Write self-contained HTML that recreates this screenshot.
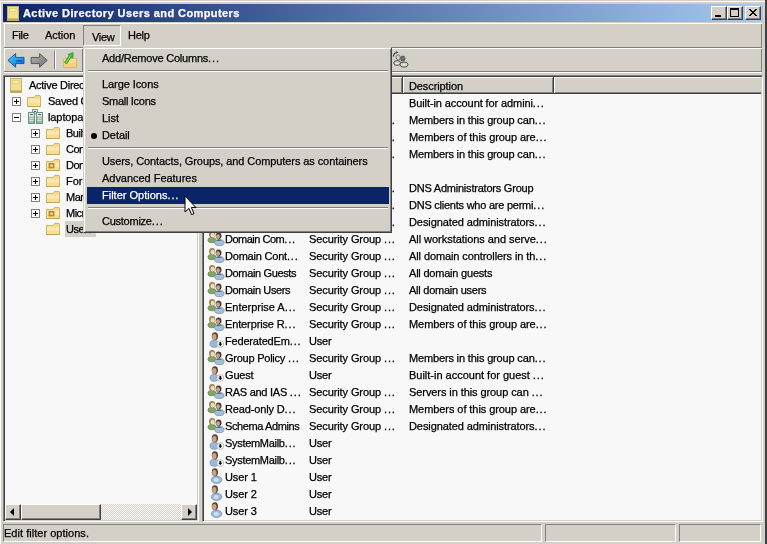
<!DOCTYPE html><html><head><meta charset="utf-8"><title>Active Directory Users and Computers</title><style>
*{box-sizing:border-box}
html,body{margin:0;padding:0}
body{width:767px;height:544px;overflow:hidden;background:#d4d0c8;position:relative;font:11px "Liberation Sans",sans-serif;color:#000}
.a{position:absolute}
.t{position:absolute;white-space:nowrap;line-height:13px;height:13px;-webkit-text-stroke:.25px currentColor}
#root{position:absolute;left:0;top:0;width:767px;height:544px;will-change:transform}
#title{left:3px;top:4px;width:760px;height:18px;background:linear-gradient(90deg,#0a246a 0%,#a6caf0 100%)}
#title .tt{left:20px;top:3px;color:#fff;font-weight:bold;}
.cb{position:absolute;top:2px;width:16px;height:14px;background:#d4d0c8;border:1px solid;border-color:#fff #404040 #404040 #fff;box-shadow:inset -1px -1px 0 #808080}
.sunk{border:1px solid;border-color:#808080 #fff #fff #808080}
.pane{background:#f8f8f8;border:1px solid;border-color:#808080 #fff #fff #808080;box-shadow:inset 1px 1px 0 #404040, inset -1px -1px 0 #d4d0c8}
.btn{background:#d4d0c8;border:1px solid;border-color:#fff #404040 #404040 #fff;box-shadow:inset -1px -1px 0 #808080}
.hl{background:#fff}.sh{background:#808080}.dk{background:#404040}
.pm{position:absolute;width:9px;height:9px;border:1px solid #808080;background:#fff}
.pm:before{content:"";position:absolute;left:1px;top:3px;width:5px;height:1px;background:#000}
.pm.p:after{content:"";position:absolute;left:3px;top:1px;width:1px;height:5px;background:#000}
</style></head><body><div id="root">
<div class="a hl" style="left:0;top:1px;width:765px;height:1px"></div>
<div class="a hl" style="left:0;top:1px;width:1px;height:543px"></div>
<div class="a" style="left:765px;top:0;width:1px;height:544px;background:#404040"></div>
<div class="a dk" style="left:766px;top:0;width:1px;height:544px"></div>
<div id="title" class="a">
<svg class="a" style="left:4px;top:2px" width="12" height="15" viewBox="0 0 12 15"><rect x=".5" y=".5" width="11" height="14" fill="#e6d486" stroke="#c8b468" stroke-width="1"/><rect x="1" y="1" width="10" height="11.5" fill="#f0e092"/><rect x="2.5" y="2.5" width="6.5" height="3" fill="#fbf0a8" stroke="#d8c470" stroke-width=".6"/><rect x=".5" y="12.5" width="11" height="2" fill="#b8a458"/></svg>
<div class="t tt"><span style="letter-spacing:0.42px">Active Directory Users and Computers</span></div>
<div class="cb" style="left:708px"><div class="a" style="left:3px;top:8px;width:6px;height:2px;background:#000"></div></div>
<div class="cb" style="left:724px"><div class="a" style="left:2px;top:1px;width:9px;height:9px;border:1px solid #000;border-top-width:2px"></div></div>
<div class="cb" style="left:742px"><svg class="a" style="left:3px;top:2px" width="8" height="7" viewBox="0 0 8 7"><path d="M0 0 L7 7 M1 0 L8 7 M7 0 L0 7 M8 0 L1 7" stroke="#000" stroke-width="1" fill="none" shape-rendering="crispEdges"/></svg></div>
</div>
<div class="a hl" style="left:4px;top:23px;width:758px;height:1px"></div>
<div class="a hl" style="left:4px;top:23px;width:1px;height:24px"></div>
<div class="a sh" style="left:4px;top:47px;width:758px;height:1px"></div>
<div class="a sh" style="left:761px;top:24px;width:1px;height:24px"></div>
<div class="t" style="left:12px;top:29px"><span style="letter-spacing:-0.31px">File</span></div>
<div class="t" style="left:45px;top:29px"><span style="letter-spacing:-0.05px">Action</span></div>
<div class="a sunk" style="left:83px;top:25px;width:38px;height:21px"></div>
<div class="t" style="left:92px;top:31px"><span style="letter-spacing:-0.29px">View</span></div>
<div class="t" style="left:128px;top:29px"><span style="letter-spacing:-0.28px">Help</span></div>
<div class="a hl" style="left:4px;top:48px;width:758px;height:1px"></div>
<div class="a hl" style="left:4px;top:48px;width:1px;height:24px"></div>
<div class="a sh" style="left:4px;top:71px;width:758px;height:1px"></div>
<div class="a sh" style="left:761px;top:49px;width:1px;height:23px"></div>
<div class="a hl" style="left:4px;top:72px;width:758px;height:1px"></div>
<svg class="a" style="left:7px;top:52px" width="18" height="17" viewBox="0 0 18 17"><defs><linearGradient id="gb" x1="0" y1="0" x2="1" y2="1"><stop offset="0" stop-color="#5cc4f8"/><stop offset=".55" stop-color="#229ae6"/><stop offset="1" stop-color="#0e5cc0"/></linearGradient><linearGradient id="gg" x1="0" y1="0" x2="1" y2="1"><stop offset="0" stop-color="#b4b4b4"/><stop offset="1" stop-color="#727272"/></linearGradient></defs><path d="M0.9 8.3 L8.6 1.6 V5.4 H17 V11.6 H8.6 V15.2 Z" fill="url(#gb)" stroke="#1c5aa6" stroke-width="1" stroke-linejoin="round"/><path d="M9 8 H15 V10 H9Z" fill="#0e58b8" opacity=".7"/></svg>
<svg class="a" style="left:30px;top:52px" width="18" height="17" viewBox="0 0 18 17"><path d="M17.2 8.3 L9.6 1.6 V5.4 H1.2 V11.6 H9.6 V15.2 Z" fill="url(#gg)" stroke="#555" stroke-width="1" stroke-linejoin="round"/></svg>
<div class="a sh" style="left:54px;top:51px;width:1px;height:18px"></div><div class="a hl" style="left:55px;top:51px;width:1px;height:18px"></div>
<div class="a sh" style="left:82px;top:49px;width:1px;height:22px"></div>
<svg class="a" style="left:62px;top:51px" width="17" height="18" viewBox="0 0 17 18"><path d="M1.5 7.5 H14.5 V16.5 H1.5Z" fill="#f6dc94" stroke="#d8b870"/><path d="M2 12 H14 V16 H2Z" fill="#f2d07c"/><path d="M6 3.4 L11.2 1.6 L10.8 7.2Z" fill="#4cba3c" stroke="#2f8f26" stroke-width=".7"/><path d="M3.4 12.4 L8.6 4.6" stroke="#2f8f26" stroke-width="3.2" fill="none"/><path d="M3.6 12.1 L8.8 4.3" stroke="#74d654" stroke-width="1.6" fill="none"/></svg>
<svg class="a" style="left:391px;top:51px" width="19" height="18" viewBox="0 0 19 18"><path d="M2.4 5.6 Q2.6 1.8 6 1.4" stroke="#4a4a4a" stroke-width="1.3" fill="none"/><path d="M5 0 L7.2 1.6 L5 2.8Z" fill="#4a4a4a"/><ellipse cx="7.2" cy="6.4" rx="2" ry="2.6" fill="#d8d8d8" stroke="#6a6a6a" stroke-width=".9"/><ellipse cx="6.2" cy="12" rx="3.4" ry="2.4" fill="#c8c8c8" stroke="#555" stroke-width="1"/><ellipse cx="11.8" cy="7.6" rx="2.2" ry="2.6" fill="#6e6e6e" stroke="#4a4a4a" stroke-width=".8"/><ellipse cx="13" cy="13.6" rx="4" ry="2.6" fill="#d0d0d0" stroke="#555" stroke-width="1"/><path d="M4.5 12.4h3M11.4 14h3.2" stroke="#f4f4f4" stroke-width="1.2"/></svg>
<div class="a pane" style="left:3px;top:75px;width:196px;height:447px"></div>
<div class="a" style="left:6px;top:76px;width:191px;height:428px;overflow:hidden">
<svg class="a" style="left:4px;top:2px" width="12" height="15" viewBox="0 0 12 15"><rect x=".5" y=".5" width="11" height="14" fill="#e6d486" stroke="#c8b468" stroke-width="1"/><rect x="1" y="1" width="10" height="11.5" fill="#f0e092"/><rect x="2.5" y="2.5" width="6.5" height="3" fill="#fbf0a8" stroke="#d8c470" stroke-width=".6"/><rect x=".5" y="12.5" width="11" height="2" fill="#b8a458"/></svg>
<div class="t" style="left:23px;top:3px"><span style="letter-spacing:-0.28px">Active Directory Users and Computers</span></div>
<div class="pm p" style="left:6px;top:21px"></div>
<svg class="a" style="left:20px;top:17px" width="16" height="16" viewBox="0 0 16 16"><path d="M1.5 4.5 H8 L9.5 2.5 H14 L14.5 3.5 V13.5 H1.5 Z" fill="#efd78c" stroke="#d2b467" stroke-width="1"/><path d="M2 5.5 H14 V13 H2 Z" fill="#f9e9ae"/><path d="M2 9.5 H14 V13 H2 Z" fill="#f4df98"/><path d="M1.5 13.5 H14.5" stroke="#c4a254" stroke-width="1"/></svg>
<div class="t" style="left:42px;top:19px"><span style="letter-spacing:-0.28px">Saved Queries</span></div>
<div class="pm " style="left:6px;top:37px"></div>
<svg class="a" style="left:20px;top:33px" width="18" height="16" viewBox="0 0 18 16"><rect x="6.5" y="0.5" width="5" height="4.5" fill="#e2e6ec" stroke="#8896a6"/><rect x="2.5" y="3.5" width="6" height="11" fill="#9abea2" stroke="#6e947c"/><rect x="10.5" y="3.5" width="6" height="11" fill="#9abea2" stroke="#6e947c"/><rect x="3" y="4" width="5" height="3.6" fill="#e6eaf0"/><rect x="11" y="4" width="5" height="3.6" fill="#e6eaf0"/><path d="M4 5.5h3M12 5.5h3M8 2.5h2" stroke="#4e607c" stroke-width="1"/><path d="M3.5 9.5h4M3.5 11.5h4M11.5 9.5h4M11.5 11.5h4" stroke="#cfe4d2" stroke-width="1"/></svg>
<div class="t" style="left:42px;top:35px"><span style="letter-spacing:-0.10px">laptopassist.local</span></div>
<div class="pm p" style="left:25px;top:53px"></div>
<svg class="a" style="left:39px;top:49px" width="16" height="16" viewBox="0 0 16 16"><path d="M1.5 4.5 H8 L9.5 2.5 H14 L14.5 3.5 V13.5 H1.5 Z" fill="#efd78c" stroke="#d2b467" stroke-width="1"/><path d="M2 5.5 H14 V13 H2 Z" fill="#f9e9ae"/><path d="M2 9.5 H14 V13 H2 Z" fill="#f4df98"/><path d="M1.5 13.5 H14.5" stroke="#c4a254" stroke-width="1"/></svg>
<div class="t" style="left:60px;top:51px"><span style="letter-spacing:-0.50px">Builtin</span></div>
<div class="pm p" style="left:25px;top:69px"></div>
<svg class="a" style="left:39px;top:65px" width="16" height="16" viewBox="0 0 16 16"><path d="M1.5 4.5 H8 L9.5 2.5 H14 L14.5 3.5 V13.5 H1.5 Z" fill="#efd78c" stroke="#d2b467" stroke-width="1"/><path d="M2 5.5 H14 V13 H2 Z" fill="#f9e9ae"/><path d="M2 9.5 H14 V13 H2 Z" fill="#f4df98"/><path d="M1.5 13.5 H14.5" stroke="#c4a254" stroke-width="1"/></svg>
<div class="t" style="left:60px;top:67px"><span style="letter-spacing:-0.50px">Computers</span></div>
<div class="pm p" style="left:25px;top:85px"></div>
<svg class="a" style="left:39px;top:81px" width="16" height="16" viewBox="0 0 16 16"><path d="M1.5 4.5 H8 L9.5 2.5 H14 L14.5 3.5 V13.5 H1.5 Z" fill="#efd78c" stroke="#d2b467" stroke-width="1"/><path d="M2 5.5 H14 V13 H2 Z" fill="#f9e9ae"/><path d="M2 9.5 H14 V13 H2 Z" fill="#f4df98"/><path d="M1.5 13.5 H14.5" stroke="#c4a254" stroke-width="1"/><rect x="4" y="6.5" width="5" height="4.5" fill="#c89a34" stroke="#a87c24" stroke-width=".8"/><rect x="5.4" y="7.8" width="2.2" height="1.8" fill="#f6e6a8"/></svg>
<div class="t" style="left:60px;top:83px"><span style="letter-spacing:-0.50px">Domain Controllers</span></div>
<div class="pm p" style="left:25px;top:101px"></div>
<svg class="a" style="left:39px;top:97px" width="16" height="16" viewBox="0 0 16 16"><path d="M1.5 4.5 H8 L9.5 2.5 H14 L14.5 3.5 V13.5 H1.5 Z" fill="#efd78c" stroke="#d2b467" stroke-width="1"/><path d="M2 5.5 H14 V13 H2 Z" fill="#f9e9ae"/><path d="M2 9.5 H14 V13 H2 Z" fill="#f4df98"/><path d="M1.5 13.5 H14.5" stroke="#c4a254" stroke-width="1"/></svg>
<div class="t" style="left:60px;top:99px"><span style="letter-spacing:0.00px">ForeignSecurityPrincipals</span></div>
<div class="pm p" style="left:25px;top:117px"></div>
<svg class="a" style="left:39px;top:113px" width="16" height="16" viewBox="0 0 16 16"><path d="M1.5 4.5 H8 L9.5 2.5 H14 L14.5 3.5 V13.5 H1.5 Z" fill="#efd78c" stroke="#d2b467" stroke-width="1"/><path d="M2 5.5 H14 V13 H2 Z" fill="#f9e9ae"/><path d="M2 9.5 H14 V13 H2 Z" fill="#f4df98"/><path d="M1.5 13.5 H14.5" stroke="#c4a254" stroke-width="1"/></svg>
<div class="t" style="left:60px;top:115px"><span style="letter-spacing:-0.50px">Managed Service Accounts</span></div>
<div class="pm p" style="left:25px;top:133px"></div>
<svg class="a" style="left:39px;top:129px" width="16" height="16" viewBox="0 0 16 16"><path d="M1.5 4.5 H8 L9.5 2.5 H14 L14.5 3.5 V13.5 H1.5 Z" fill="#efd78c" stroke="#d2b467" stroke-width="1"/><path d="M2 5.5 H14 V13 H2 Z" fill="#f9e9ae"/><path d="M2 9.5 H14 V13 H2 Z" fill="#f4df98"/><path d="M1.5 13.5 H14.5" stroke="#c4a254" stroke-width="1"/><rect x="4" y="6.5" width="5" height="4.5" fill="#c89a34" stroke="#a87c24" stroke-width=".8"/><rect x="5.4" y="7.8" width="2.2" height="1.8" fill="#f6e6a8"/></svg>
<div class="t" style="left:60px;top:131px"><span style="letter-spacing:-0.50px">Microsoft Exchange Security Groups</span></div>
<svg class="a" style="left:39px;top:145px" width="16" height="16" viewBox="0 0 16 16"><path d="M1.5 4.5 H8 L9.5 2.5 H14 L14.5 3.5 V13.5 H1.5 Z" fill="#efd78c" stroke="#d2b467" stroke-width="1"/><path d="M2 5.5 H14 V13 H2 Z" fill="#f9e9ae"/><path d="M2 9.5 H14 V13 H2 Z" fill="#f4df98"/><path d="M1.5 13.5 H14.5" stroke="#c4a254" stroke-width="1"/></svg>
<div class="a" style="left:59px;top:145px;width:31px;height:16px;background:#d4d0c8"></div>
<div class="t" style="left:60px;top:147px"><span style="letter-spacing:-0.50px">Users</span></div>
</div>
<div class="a" style="left:5px;top:504px;width:192px;height:16px;background:repeating-conic-gradient(#fff 0% 25%,#d4d0c8 0% 50%) 0 0/2px 2px"></div>
<div class="a btn" style="left:5px;top:504px;width:16px;height:16px"><div class="a" style="left:4px;top:3px;border:4px solid transparent;border-right:4px solid #000;border-left:0"></div></div>
<div class="a btn" style="left:21px;top:504px;width:80px;height:16px"></div>
<div class="a btn" style="left:181px;top:504px;width:16px;height:16px"><div class="a" style="left:6px;top:3px;border:4px solid transparent;border-left:4px solid #000;border-right:0"></div></div>
<div class="a pane" style="left:202px;top:75px;width:561px;height:447px"></div>
<div class="a" style="left:204px;top:77px;width:557px;height:17px;background:#d4d0c8;border-bottom:1px solid #404040;box-shadow:inset 0 -1px 0 #808080, inset 0 1px 0 #fff"></div>
<div class="a sh" style="left:303px;top:78px;width:1px;height:15px"></div><div class="a dk" style="left:304px;top:77px;width:1px;height:17px"></div><div class="a hl" style="left:305px;top:77px;width:1px;height:16px"></div>
<div class="a sh" style="left:401px;top:78px;width:1px;height:15px"></div><div class="a dk" style="left:402px;top:77px;width:1px;height:17px"></div><div class="a hl" style="left:403px;top:77px;width:1px;height:16px"></div>
<div class="a sh" style="left:552px;top:78px;width:1px;height:15px"></div><div class="a dk" style="left:553px;top:77px;width:1px;height:17px"></div><div class="a hl" style="left:554px;top:77px;width:1px;height:16px"></div>
<div class="t" style="left:211px;top:80px">Name</div>
<div class="t" style="left:311px;top:80px">Type</div>
<div class="t" style="left:409px;top:80px"><span style="letter-spacing:-0.10px">Description</span></div>
<svg class="a" style="left:208px;top:94px" width="17" height="16" viewBox="0 0 17 16"><ellipse cx="8.6" cy="11.8" rx="5.3" ry="3.7" fill="#9cb8dc" stroke="#6c8cb4" stroke-width=".7"/><ellipse cx="8.2" cy="12" rx="2.6" ry="2" fill="#cfe0f0"/><ellipse cx="6.9" cy="4.2" rx="3.1" ry="4" fill="#5c4434"/><ellipse cx="6.3" cy="5" rx="2.2" ry="2.9" fill="#caa484"/></svg>
<div class="t" style="left:225px;top:97px"><span style="letter-spacing:-0.20px">Administrator</span></div>
<div class="t" style="left:309px;top:97px"><span style="letter-spacing:-0.16px">User</span></div>
<div class="t" style="left:409px;top:97px"><span style="letter-spacing:-0.10px">Built-in account for admini</span><span style="letter-spacing:.9px">...</span></div>
<svg class="a" style="left:207px;top:111px" width="18" height="16" viewBox="0 0 18 16"><ellipse cx="4.9" cy="10.1" rx="4" ry="2.7" fill="#82a662" stroke="#5f8448" stroke-width=".7"/><ellipse cx="5.1" cy="4.5" rx="3.1" ry="3.4" fill="#9a8658"/><ellipse cx="5.7" cy="5.2" rx="2" ry="2.4" fill="#f0dcc0"/><ellipse cx="12.4" cy="12.6" rx="4.7" ry="3.1" fill="#a6bfd8" stroke="#6c88a8" stroke-width=".7"/><path d="M9 10.4 Q12 8.6 15 10.6 Q12 11.6 9 10.4Z" fill="#586878"/><ellipse cx="11.6" cy="5.8" rx="2.9" ry="3.4" fill="#4e3c30"/><ellipse cx="11" cy="6.6" rx="1.9" ry="2.4" fill="#c8a890"/></svg>
<div class="t" style="left:225px;top:114px"><span style="letter-spacing:-0.20px">Allowed RO</span><span style="letter-spacing:.9px">...</span></div>
<div class="t" style="left:309px;top:114px"><span style="letter-spacing:-0.10px">Security Group </span><span style="letter-spacing:.9px">...</span></div>
<div class="t" style="left:409px;top:114px"><span style="letter-spacing:-0.16px">Members in this group can</span><span style="letter-spacing:.9px">...</span></div>
<svg class="a" style="left:207px;top:128px" width="18" height="16" viewBox="0 0 18 16"><ellipse cx="4.9" cy="10.1" rx="4" ry="2.7" fill="#82a662" stroke="#5f8448" stroke-width=".7"/><ellipse cx="5.1" cy="4.5" rx="3.1" ry="3.4" fill="#9a8658"/><ellipse cx="5.7" cy="5.2" rx="2" ry="2.4" fill="#f0dcc0"/><ellipse cx="12.4" cy="12.6" rx="4.7" ry="3.1" fill="#a6bfd8" stroke="#6c88a8" stroke-width=".7"/><path d="M9 10.4 Q12 8.6 15 10.6 Q12 11.6 9 10.4Z" fill="#586878"/><ellipse cx="11.6" cy="5.8" rx="2.9" ry="3.4" fill="#4e3c30"/><ellipse cx="11" cy="6.6" rx="1.9" ry="2.4" fill="#c8a890"/></svg>
<div class="t" style="left:225px;top:131px"><span style="letter-spacing:-0.20px">Cert Publish</span><span style="letter-spacing:.9px">...</span></div>
<div class="t" style="left:309px;top:131px"><span style="letter-spacing:-0.10px">Security Group </span><span style="letter-spacing:.9px">...</span></div>
<div class="t" style="left:409px;top:131px"><span style="letter-spacing:-0.07px">Members of this group are</span><span style="letter-spacing:.9px">...</span></div>
<svg class="a" style="left:207px;top:145px" width="18" height="16" viewBox="0 0 18 16"><ellipse cx="4.9" cy="10.1" rx="4" ry="2.7" fill="#82a662" stroke="#5f8448" stroke-width=".7"/><ellipse cx="5.1" cy="4.5" rx="3.1" ry="3.4" fill="#9a8658"/><ellipse cx="5.7" cy="5.2" rx="2" ry="2.4" fill="#f0dcc0"/><ellipse cx="12.4" cy="12.6" rx="4.7" ry="3.1" fill="#a6bfd8" stroke="#6c88a8" stroke-width=".7"/><path d="M9 10.4 Q12 8.6 15 10.6 Q12 11.6 9 10.4Z" fill="#586878"/><ellipse cx="11.6" cy="5.8" rx="2.9" ry="3.4" fill="#4e3c30"/><ellipse cx="11" cy="6.6" rx="1.9" ry="2.4" fill="#c8a890"/></svg>
<div class="t" style="left:225px;top:148px"><span style="letter-spacing:-0.20px">Denied ROD</span><span style="letter-spacing:.9px">...</span></div>
<div class="t" style="left:309px;top:148px"><span style="letter-spacing:-0.10px">Security Group </span><span style="letter-spacing:.9px">...</span></div>
<div class="t" style="left:409px;top:148px"><span style="letter-spacing:-0.16px">Members in this group can</span><span style="letter-spacing:.9px">...</span></div>
<svg class="a" style="left:208px;top:162px" width="17" height="16" viewBox="0 0 17 16"><ellipse cx="6.2" cy="11.8" rx="4.2" ry="3.5" fill="#9cb8d8" stroke="#6c8cb0" stroke-width=".7"/><ellipse cx="6.9" cy="4.2" rx="3.1" ry="4" fill="#5c4434"/><ellipse cx="6.3" cy="5" rx="2.2" ry="2.9" fill="#caa484"/><circle cx="12.3" cy="12" r="3.4" fill="#fff" stroke="#a8a8a8" stroke-width=".7"/><path d="M12.3 9.9 V12.4" stroke="#111" stroke-width="1.7" fill="none"/><path d="M10.3 11.8 H14.3 L12.3 14.3Z" fill="#111"/></svg>
<div class="t" style="left:225px;top:165px"><span style="letter-spacing:-0.20px">Dept Mailbox</span></div>
<div class="t" style="left:309px;top:165px"><span style="letter-spacing:-0.16px">User</span></div>
<svg class="a" style="left:207px;top:179px" width="18" height="16" viewBox="0 0 18 16"><ellipse cx="4.9" cy="10.1" rx="4" ry="2.7" fill="#82a662" stroke="#5f8448" stroke-width=".7"/><ellipse cx="5.1" cy="4.5" rx="3.1" ry="3.4" fill="#9a8658"/><ellipse cx="5.7" cy="5.2" rx="2" ry="2.4" fill="#f0dcc0"/><ellipse cx="12.4" cy="12.6" rx="4.7" ry="3.1" fill="#a6bfd8" stroke="#6c88a8" stroke-width=".7"/><path d="M9 10.4 Q12 8.6 15 10.6 Q12 11.6 9 10.4Z" fill="#586878"/><ellipse cx="11.6" cy="5.8" rx="2.9" ry="3.4" fill="#4e3c30"/><ellipse cx="11" cy="6.6" rx="1.9" ry="2.4" fill="#c8a890"/></svg>
<div class="t" style="left:225px;top:182px"><span style="letter-spacing:-0.20px">DnsAdmins</span></div>
<div class="t" style="left:309px;top:182px"><span style="letter-spacing:-0.10px">Security Group </span><span style="letter-spacing:.9px">...</span></div>
<div class="t" style="left:409px;top:182px"><span style="letter-spacing:-0.22px">DNS Administrators Group</span></div>
<svg class="a" style="left:207px;top:196px" width="18" height="16" viewBox="0 0 18 16"><ellipse cx="4.9" cy="10.1" rx="4" ry="2.7" fill="#82a662" stroke="#5f8448" stroke-width=".7"/><ellipse cx="5.1" cy="4.5" rx="3.1" ry="3.4" fill="#9a8658"/><ellipse cx="5.7" cy="5.2" rx="2" ry="2.4" fill="#f0dcc0"/><ellipse cx="12.4" cy="12.6" rx="4.7" ry="3.1" fill="#a6bfd8" stroke="#6c88a8" stroke-width=".7"/><path d="M9 10.4 Q12 8.6 15 10.6 Q12 11.6 9 10.4Z" fill="#586878"/><ellipse cx="11.6" cy="5.8" rx="2.9" ry="3.4" fill="#4e3c30"/><ellipse cx="11" cy="6.6" rx="1.9" ry="2.4" fill="#c8a890"/></svg>
<div class="t" style="left:225px;top:199px"><span style="letter-spacing:-0.20px">DnsUpdateP</span><span style="letter-spacing:.9px">...</span></div>
<div class="t" style="left:309px;top:199px"><span style="letter-spacing:-0.10px">Security Group </span><span style="letter-spacing:.9px">...</span></div>
<div class="t" style="left:409px;top:199px"><span style="letter-spacing:-0.24px">DNS clients who are permi</span><span style="letter-spacing:.9px">...</span></div>
<svg class="a" style="left:207px;top:213px" width="18" height="16" viewBox="0 0 18 16"><ellipse cx="4.9" cy="10.1" rx="4" ry="2.7" fill="#82a662" stroke="#5f8448" stroke-width=".7"/><ellipse cx="5.1" cy="4.5" rx="3.1" ry="3.4" fill="#9a8658"/><ellipse cx="5.7" cy="5.2" rx="2" ry="2.4" fill="#f0dcc0"/><ellipse cx="12.4" cy="12.6" rx="4.7" ry="3.1" fill="#a6bfd8" stroke="#6c88a8" stroke-width=".7"/><path d="M9 10.4 Q12 8.6 15 10.6 Q12 11.6 9 10.4Z" fill="#586878"/><ellipse cx="11.6" cy="5.8" rx="2.9" ry="3.4" fill="#4e3c30"/><ellipse cx="11" cy="6.6" rx="1.9" ry="2.4" fill="#c8a890"/></svg>
<div class="t" style="left:225px;top:216px"><span style="letter-spacing:-0.20px">Domain Admins</span></div>
<div class="t" style="left:309px;top:216px"><span style="letter-spacing:-0.10px">Security Group </span><span style="letter-spacing:.9px">...</span></div>
<div class="t" style="left:409px;top:216px"><span style="letter-spacing:-0.09px">Designated administrators</span><span style="letter-spacing:.9px">...</span></div>
<svg class="a" style="left:207px;top:230px" width="18" height="16" viewBox="0 0 18 16"><ellipse cx="4.9" cy="10.1" rx="4" ry="2.7" fill="#82a662" stroke="#5f8448" stroke-width=".7"/><ellipse cx="5.1" cy="4.5" rx="3.1" ry="3.4" fill="#9a8658"/><ellipse cx="5.7" cy="5.2" rx="2" ry="2.4" fill="#f0dcc0"/><ellipse cx="12.4" cy="12.6" rx="4.7" ry="3.1" fill="#a6bfd8" stroke="#6c88a8" stroke-width=".7"/><path d="M9 10.4 Q12 8.6 15 10.6 Q12 11.6 9 10.4Z" fill="#586878"/><ellipse cx="11.6" cy="5.8" rx="2.9" ry="3.4" fill="#4e3c30"/><ellipse cx="11" cy="6.6" rx="1.9" ry="2.4" fill="#c8a890"/></svg>
<div class="t" style="left:225px;top:233px"><span style="letter-spacing:-0.50px">Domain Com</span><span style="letter-spacing:.9px">...</span></div>
<div class="t" style="left:309px;top:233px"><span style="letter-spacing:-0.10px">Security Group </span><span style="letter-spacing:.9px">...</span></div>
<div class="t" style="left:409px;top:233px"><span style="letter-spacing:-0.04px">All workstations and serve</span><span style="letter-spacing:.9px">...</span></div>
<svg class="a" style="left:207px;top:247px" width="18" height="16" viewBox="0 0 18 16"><ellipse cx="4.9" cy="10.1" rx="4" ry="2.7" fill="#82a662" stroke="#5f8448" stroke-width=".7"/><ellipse cx="5.1" cy="4.5" rx="3.1" ry="3.4" fill="#9a8658"/><ellipse cx="5.7" cy="5.2" rx="2" ry="2.4" fill="#f0dcc0"/><ellipse cx="12.4" cy="12.6" rx="4.7" ry="3.1" fill="#a6bfd8" stroke="#6c88a8" stroke-width=".7"/><path d="M9 10.4 Q12 8.6 15 10.6 Q12 11.6 9 10.4Z" fill="#586878"/><ellipse cx="11.6" cy="5.8" rx="2.9" ry="3.4" fill="#4e3c30"/><ellipse cx="11" cy="6.6" rx="1.9" ry="2.4" fill="#c8a890"/></svg>
<div class="t" style="left:225px;top:250px"><span style="letter-spacing:-0.21px">Domain Cont</span><span style="letter-spacing:.9px">...</span></div>
<div class="t" style="left:309px;top:250px"><span style="letter-spacing:-0.10px">Security Group </span><span style="letter-spacing:.9px">...</span></div>
<div class="t" style="left:409px;top:250px"><span style="letter-spacing:-0.10px">All domain controllers in th</span><span style="letter-spacing:.9px">...</span></div>
<svg class="a" style="left:207px;top:264px" width="18" height="16" viewBox="0 0 18 16"><ellipse cx="4.9" cy="10.1" rx="4" ry="2.7" fill="#82a662" stroke="#5f8448" stroke-width=".7"/><ellipse cx="5.1" cy="4.5" rx="3.1" ry="3.4" fill="#9a8658"/><ellipse cx="5.7" cy="5.2" rx="2" ry="2.4" fill="#f0dcc0"/><ellipse cx="12.4" cy="12.6" rx="4.7" ry="3.1" fill="#a6bfd8" stroke="#6c88a8" stroke-width=".7"/><path d="M9 10.4 Q12 8.6 15 10.6 Q12 11.6 9 10.4Z" fill="#586878"/><ellipse cx="11.6" cy="5.8" rx="2.9" ry="3.4" fill="#4e3c30"/><ellipse cx="11" cy="6.6" rx="1.9" ry="2.4" fill="#c8a890"/></svg>
<div class="t" style="left:225px;top:267px"><span style="letter-spacing:-0.36px">Domain Guests</span></div>
<div class="t" style="left:309px;top:267px"><span style="letter-spacing:-0.10px">Security Group </span><span style="letter-spacing:.9px">...</span></div>
<div class="t" style="left:409px;top:267px"><span style="letter-spacing:-0.21px">All domain guests</span></div>
<svg class="a" style="left:207px;top:281px" width="18" height="16" viewBox="0 0 18 16"><ellipse cx="4.9" cy="10.1" rx="4" ry="2.7" fill="#82a662" stroke="#5f8448" stroke-width=".7"/><ellipse cx="5.1" cy="4.5" rx="3.1" ry="3.4" fill="#9a8658"/><ellipse cx="5.7" cy="5.2" rx="2" ry="2.4" fill="#f0dcc0"/><ellipse cx="12.4" cy="12.6" rx="4.7" ry="3.1" fill="#a6bfd8" stroke="#6c88a8" stroke-width=".7"/><path d="M9 10.4 Q12 8.6 15 10.6 Q12 11.6 9 10.4Z" fill="#586878"/><ellipse cx="11.6" cy="5.8" rx="2.9" ry="3.4" fill="#4e3c30"/><ellipse cx="11" cy="6.6" rx="1.9" ry="2.4" fill="#c8a890"/></svg>
<div class="t" style="left:225px;top:284px"><span style="letter-spacing:-0.37px">Domain Users</span></div>
<div class="t" style="left:309px;top:284px"><span style="letter-spacing:-0.10px">Security Group </span><span style="letter-spacing:.9px">...</span></div>
<div class="t" style="left:409px;top:284px"><span style="letter-spacing:-0.25px">All domain users</span></div>
<svg class="a" style="left:207px;top:298px" width="18" height="16" viewBox="0 0 18 16"><ellipse cx="4.9" cy="10.1" rx="4" ry="2.7" fill="#82a662" stroke="#5f8448" stroke-width=".7"/><ellipse cx="5.1" cy="4.5" rx="3.1" ry="3.4" fill="#9a8658"/><ellipse cx="5.7" cy="5.2" rx="2" ry="2.4" fill="#f0dcc0"/><ellipse cx="12.4" cy="12.6" rx="4.7" ry="3.1" fill="#a6bfd8" stroke="#6c88a8" stroke-width=".7"/><path d="M9 10.4 Q12 8.6 15 10.6 Q12 11.6 9 10.4Z" fill="#586878"/><ellipse cx="11.6" cy="5.8" rx="2.9" ry="3.4" fill="#4e3c30"/><ellipse cx="11" cy="6.6" rx="1.9" ry="2.4" fill="#c8a890"/></svg>
<div class="t" style="left:225px;top:301px"><span style="letter-spacing:-0.02px">Enterprise A</span><span style="letter-spacing:.9px">...</span></div>
<div class="t" style="left:309px;top:301px"><span style="letter-spacing:-0.10px">Security Group </span><span style="letter-spacing:.9px">...</span></div>
<div class="t" style="left:409px;top:301px"><span style="letter-spacing:-0.09px">Designated administrators</span><span style="letter-spacing:.9px">...</span></div>
<svg class="a" style="left:207px;top:315px" width="18" height="16" viewBox="0 0 18 16"><ellipse cx="4.9" cy="10.1" rx="4" ry="2.7" fill="#82a662" stroke="#5f8448" stroke-width=".7"/><ellipse cx="5.1" cy="4.5" rx="3.1" ry="3.4" fill="#9a8658"/><ellipse cx="5.7" cy="5.2" rx="2" ry="2.4" fill="#f0dcc0"/><ellipse cx="12.4" cy="12.6" rx="4.7" ry="3.1" fill="#a6bfd8" stroke="#6c88a8" stroke-width=".7"/><path d="M9 10.4 Q12 8.6 15 10.6 Q12 11.6 9 10.4Z" fill="#586878"/><ellipse cx="11.6" cy="5.8" rx="2.9" ry="3.4" fill="#4e3c30"/><ellipse cx="11" cy="6.6" rx="1.9" ry="2.4" fill="#c8a890"/></svg>
<div class="t" style="left:225px;top:318px"><span style="letter-spacing:-0.13px">Enterprise R</span><span style="letter-spacing:.9px">...</span></div>
<div class="t" style="left:309px;top:318px"><span style="letter-spacing:-0.10px">Security Group </span><span style="letter-spacing:.9px">...</span></div>
<div class="t" style="left:409px;top:318px"><span style="letter-spacing:-0.07px">Members of this group are</span><span style="letter-spacing:.9px">...</span></div>
<svg class="a" style="left:208px;top:332px" width="17" height="16" viewBox="0 0 17 16"><ellipse cx="6.2" cy="11.8" rx="4.2" ry="3.5" fill="#9cb8d8" stroke="#6c8cb0" stroke-width=".7"/><ellipse cx="6.9" cy="4.2" rx="3.1" ry="4" fill="#5c4434"/><ellipse cx="6.3" cy="5" rx="2.2" ry="2.9" fill="#caa484"/><circle cx="12.3" cy="12" r="3.4" fill="#fff" stroke="#a8a8a8" stroke-width=".7"/><path d="M12.3 9.9 V12.4" stroke="#111" stroke-width="1.7" fill="none"/><path d="M10.3 11.8 H14.3 L12.3 14.3Z" fill="#111"/></svg>
<div class="t" style="left:225px;top:335px"><span style="letter-spacing:-0.18px">FederatedEm</span><span style="letter-spacing:.9px">...</span></div>
<div class="t" style="left:309px;top:335px"><span style="letter-spacing:-0.16px">User</span></div>
<svg class="a" style="left:207px;top:349px" width="18" height="16" viewBox="0 0 18 16"><ellipse cx="4.9" cy="10.1" rx="4" ry="2.7" fill="#82a662" stroke="#5f8448" stroke-width=".7"/><ellipse cx="5.1" cy="4.5" rx="3.1" ry="3.4" fill="#9a8658"/><ellipse cx="5.7" cy="5.2" rx="2" ry="2.4" fill="#f0dcc0"/><ellipse cx="12.4" cy="12.6" rx="4.7" ry="3.1" fill="#a6bfd8" stroke="#6c88a8" stroke-width=".7"/><path d="M9 10.4 Q12 8.6 15 10.6 Q12 11.6 9 10.4Z" fill="#586878"/><ellipse cx="11.6" cy="5.8" rx="2.9" ry="3.4" fill="#4e3c30"/><ellipse cx="11" cy="6.6" rx="1.9" ry="2.4" fill="#c8a890"/></svg>
<div class="t" style="left:225px;top:352px"><span style="letter-spacing:-0.24px">Group Policy </span><span style="letter-spacing:.9px">...</span></div>
<div class="t" style="left:309px;top:352px"><span style="letter-spacing:-0.10px">Security Group </span><span style="letter-spacing:.9px">...</span></div>
<div class="t" style="left:409px;top:352px"><span style="letter-spacing:-0.16px">Members in this group can</span><span style="letter-spacing:.9px">...</span></div>
<svg class="a" style="left:208px;top:366px" width="17" height="16" viewBox="0 0 17 16"><ellipse cx="6.2" cy="11.8" rx="4.2" ry="3.5" fill="#9cb8d8" stroke="#6c8cb0" stroke-width=".7"/><ellipse cx="6.9" cy="4.2" rx="3.1" ry="4" fill="#5c4434"/><ellipse cx="6.3" cy="5" rx="2.2" ry="2.9" fill="#caa484"/><circle cx="12.3" cy="12" r="3.4" fill="#fff" stroke="#a8a8a8" stroke-width=".7"/><path d="M12.3 9.9 V12.4" stroke="#111" stroke-width="1.7" fill="none"/><path d="M10.3 11.8 H14.3 L12.3 14.3Z" fill="#111"/></svg>
<div class="t" style="left:225px;top:369px"><span style="letter-spacing:-0.17px">Guest</span></div>
<div class="t" style="left:309px;top:369px"><span style="letter-spacing:-0.16px">User</span></div>
<div class="t" style="left:409px;top:369px"><span style="letter-spacing:-0.01px">Built-in account for guest </span><span style="letter-spacing:.9px">...</span></div>
<svg class="a" style="left:207px;top:383px" width="18" height="16" viewBox="0 0 18 16"><ellipse cx="4.9" cy="10.1" rx="4" ry="2.7" fill="#82a662" stroke="#5f8448" stroke-width=".7"/><ellipse cx="5.1" cy="4.5" rx="3.1" ry="3.4" fill="#9a8658"/><ellipse cx="5.7" cy="5.2" rx="2" ry="2.4" fill="#f0dcc0"/><ellipse cx="12.4" cy="12.6" rx="4.7" ry="3.1" fill="#a6bfd8" stroke="#6c88a8" stroke-width=".7"/><path d="M9 10.4 Q12 8.6 15 10.6 Q12 11.6 9 10.4Z" fill="#586878"/><ellipse cx="11.6" cy="5.8" rx="2.9" ry="3.4" fill="#4e3c30"/><ellipse cx="11" cy="6.6" rx="1.9" ry="2.4" fill="#c8a890"/></svg>
<div class="t" style="left:225px;top:386px"><span style="letter-spacing:-0.26px">RAS and IAS </span><span style="letter-spacing:.9px">...</span></div>
<div class="t" style="left:309px;top:386px"><span style="letter-spacing:-0.10px">Security Group </span><span style="letter-spacing:.9px">...</span></div>
<div class="t" style="left:409px;top:386px"><span style="letter-spacing:-0.08px">Servers in this group can </span><span style="letter-spacing:.9px">...</span></div>
<svg class="a" style="left:207px;top:400px" width="18" height="16" viewBox="0 0 18 16"><ellipse cx="4.9" cy="10.1" rx="4" ry="2.7" fill="#82a662" stroke="#5f8448" stroke-width=".7"/><ellipse cx="5.1" cy="4.5" rx="3.1" ry="3.4" fill="#9a8658"/><ellipse cx="5.7" cy="5.2" rx="2" ry="2.4" fill="#f0dcc0"/><ellipse cx="12.4" cy="12.6" rx="4.7" ry="3.1" fill="#a6bfd8" stroke="#6c88a8" stroke-width=".7"/><path d="M9 10.4 Q12 8.6 15 10.6 Q12 11.6 9 10.4Z" fill="#586878"/><ellipse cx="11.6" cy="5.8" rx="2.9" ry="3.4" fill="#4e3c30"/><ellipse cx="11" cy="6.6" rx="1.9" ry="2.4" fill="#c8a890"/></svg>
<div class="t" style="left:225px;top:403px"><span style="letter-spacing:-0.14px">Read-only D</span><span style="letter-spacing:.9px">...</span></div>
<div class="t" style="left:309px;top:403px"><span style="letter-spacing:-0.10px">Security Group </span><span style="letter-spacing:.9px">...</span></div>
<div class="t" style="left:409px;top:403px"><span style="letter-spacing:-0.07px">Members of this group are</span><span style="letter-spacing:.9px">...</span></div>
<svg class="a" style="left:207px;top:417px" width="18" height="16" viewBox="0 0 18 16"><ellipse cx="4.9" cy="10.1" rx="4" ry="2.7" fill="#82a662" stroke="#5f8448" stroke-width=".7"/><ellipse cx="5.1" cy="4.5" rx="3.1" ry="3.4" fill="#9a8658"/><ellipse cx="5.7" cy="5.2" rx="2" ry="2.4" fill="#f0dcc0"/><ellipse cx="12.4" cy="12.6" rx="4.7" ry="3.1" fill="#a6bfd8" stroke="#6c88a8" stroke-width=".7"/><path d="M9 10.4 Q12 8.6 15 10.6 Q12 11.6 9 10.4Z" fill="#586878"/><ellipse cx="11.6" cy="5.8" rx="2.9" ry="3.4" fill="#4e3c30"/><ellipse cx="11" cy="6.6" rx="1.9" ry="2.4" fill="#c8a890"/></svg>
<div class="t" style="left:225px;top:420px"><span style="letter-spacing:-0.39px">Schema Admins</span></div>
<div class="t" style="left:309px;top:420px"><span style="letter-spacing:-0.10px">Security Group </span><span style="letter-spacing:.9px">...</span></div>
<div class="t" style="left:409px;top:420px"><span style="letter-spacing:-0.09px">Designated administrators</span><span style="letter-spacing:.9px">...</span></div>
<svg class="a" style="left:208px;top:434px" width="17" height="16" viewBox="0 0 17 16"><ellipse cx="6.2" cy="11.8" rx="4.2" ry="3.5" fill="#9cb8d8" stroke="#6c8cb0" stroke-width=".7"/><ellipse cx="6.9" cy="4.2" rx="3.1" ry="4" fill="#5c4434"/><ellipse cx="6.3" cy="5" rx="2.2" ry="2.9" fill="#caa484"/><circle cx="12.3" cy="12" r="3.4" fill="#fff" stroke="#a8a8a8" stroke-width=".7"/><path d="M12.3 9.9 V12.4" stroke="#111" stroke-width="1.7" fill="none"/><path d="M10.3 11.8 H14.3 L12.3 14.3Z" fill="#111"/></svg>
<div class="t" style="left:225px;top:437px"><span style="letter-spacing:-0.30px">SystemMailb</span><span style="letter-spacing:.9px">...</span></div>
<div class="t" style="left:309px;top:437px"><span style="letter-spacing:-0.16px">User</span></div>
<svg class="a" style="left:208px;top:451px" width="17" height="16" viewBox="0 0 17 16"><ellipse cx="6.2" cy="11.8" rx="4.2" ry="3.5" fill="#9cb8d8" stroke="#6c8cb0" stroke-width=".7"/><ellipse cx="6.9" cy="4.2" rx="3.1" ry="4" fill="#5c4434"/><ellipse cx="6.3" cy="5" rx="2.2" ry="2.9" fill="#caa484"/><circle cx="12.3" cy="12" r="3.4" fill="#fff" stroke="#a8a8a8" stroke-width=".7"/><path d="M12.3 9.9 V12.4" stroke="#111" stroke-width="1.7" fill="none"/><path d="M10.3 11.8 H14.3 L12.3 14.3Z" fill="#111"/></svg>
<div class="t" style="left:225px;top:454px"><span style="letter-spacing:-0.30px">SystemMailb</span><span style="letter-spacing:.9px">...</span></div>
<div class="t" style="left:309px;top:454px"><span style="letter-spacing:-0.16px">User</span></div>
<svg class="a" style="left:208px;top:468px" width="17" height="16" viewBox="0 0 17 16"><ellipse cx="8.6" cy="11.8" rx="5.3" ry="3.7" fill="#9cb8dc" stroke="#6c8cb4" stroke-width=".7"/><ellipse cx="8.2" cy="12" rx="2.6" ry="2" fill="#cfe0f0"/><ellipse cx="6.9" cy="4.2" rx="3.1" ry="4" fill="#5c4434"/><ellipse cx="6.3" cy="5" rx="2.2" ry="2.9" fill="#caa484"/></svg>
<div class="t" style="left:225px;top:471px"><span style="letter-spacing:-0.13px">User 1</span></div>
<div class="t" style="left:309px;top:471px"><span style="letter-spacing:-0.16px">User</span></div>
<svg class="a" style="left:208px;top:485px" width="17" height="16" viewBox="0 0 17 16"><ellipse cx="8.6" cy="11.8" rx="5.3" ry="3.7" fill="#9cb8dc" stroke="#6c8cb4" stroke-width=".7"/><ellipse cx="8.2" cy="12" rx="2.6" ry="2" fill="#cfe0f0"/><ellipse cx="6.9" cy="4.2" rx="3.1" ry="4" fill="#5c4434"/><ellipse cx="6.3" cy="5" rx="2.2" ry="2.9" fill="#caa484"/></svg>
<div class="t" style="left:225px;top:488px"><span style="letter-spacing:-0.13px">User 2</span></div>
<div class="t" style="left:309px;top:488px"><span style="letter-spacing:-0.16px">User</span></div>
<svg class="a" style="left:208px;top:502px" width="17" height="16" viewBox="0 0 17 16"><ellipse cx="8.6" cy="11.8" rx="5.3" ry="3.7" fill="#9cb8dc" stroke="#6c8cb4" stroke-width=".7"/><ellipse cx="8.2" cy="12" rx="2.6" ry="2" fill="#cfe0f0"/><ellipse cx="6.9" cy="4.2" rx="3.1" ry="4" fill="#5c4434"/><ellipse cx="6.3" cy="5" rx="2.2" ry="2.9" fill="#caa484"/></svg>
<div class="t" style="left:225px;top:505px"><span style="letter-spacing:-0.13px">User 3</span></div>
<div class="t" style="left:309px;top:505px"><span style="letter-spacing:-0.16px">User</span></div>
<div class="a sunk" style="left:3px;top:524px;width:539px;height:18px"></div>
<div class="a sunk" style="left:545px;top:524px;width:131px;height:18px"></div>
<div class="a sunk" style="left:679px;top:524px;width:82px;height:18px"></div>
<div class="t" style="left:4px;top:527px"><span style="letter-spacing:0.03px">Edit filter options.</span></div>
<div class="a" style="left:83px;top:47px;width:309px;height:186px;background:#d4d0c8;border:1px solid;border-color:#d4d0c8 #404040 #404040 #d4d0c8;box-shadow:inset 1px 1px 0 #fff, inset -1px -1px 0 #808080">
<div class="t" style="left:18px;top:4px;"><span style="letter-spacing:-0.22px">Add/Remove Columns</span><span style="letter-spacing:.9px">...</span></div>
<div class="a sh" style="left:4px;top:22px;width:300px;height:1px"></div><div class="a hl" style="left:4px;top:23px;width:300px;height:1px"></div>
<div class="t" style="left:18px;top:30px;"><span style="letter-spacing:-0.08px">Large Icons</span></div>
<div class="t" style="left:18px;top:47px;"><span style="letter-spacing:-0.29px">Small Icons</span></div>
<div class="t" style="left:18px;top:64px;"><span style="letter-spacing:-0.06px">List</span></div>
<div class="a" style="left:7px;top:85px;width:6px;height:6px;border-radius:3px;background:#000"></div><div class="t" style="left:18px;top:81px;"><span style="letter-spacing:-0.07px">Detail</span></div>
<div class="a sh" style="left:4px;top:99px;width:300px;height:1px"></div><div class="a hl" style="left:4px;top:100px;width:300px;height:1px"></div>
<div class="t" style="left:18px;top:107px;"><span style="letter-spacing:-0.09px">Users, Contacts, Groups, and Computers as containers</span></div>
<div class="t" style="left:18px;top:124px;"><span style="letter-spacing:-0.03px">Advanced Features</span></div>
<div class="a" style="left:3px;top:139px;width:302px;height:17px;background:#0a246a"></div><div class="t" style="left:18px;top:141px;color:#fff"><span style="letter-spacing:0.00px">Filter Options</span><span style="letter-spacing:.9px">...</span></div>
<div class="a sh" style="left:4px;top:159px;width:300px;height:1px"></div><div class="a hl" style="left:4px;top:160px;width:300px;height:1px"></div>
<div class="t" style="left:18px;top:167px;"><span style="letter-spacing:-0.25px">Customize</span><span style="letter-spacing:.9px">...</span></div>
</div>
<svg class="a" style="left:184px;top:195px" width="13" height="21" viewBox="0 0 13 21"><path d="M1 1 V17 L5 13.4 L7.6 19.6 L10 18.6 L7.4 12.6 H12 Z" fill="#fff" stroke="#000" stroke-width="1"/></svg>
</div></body></html>
